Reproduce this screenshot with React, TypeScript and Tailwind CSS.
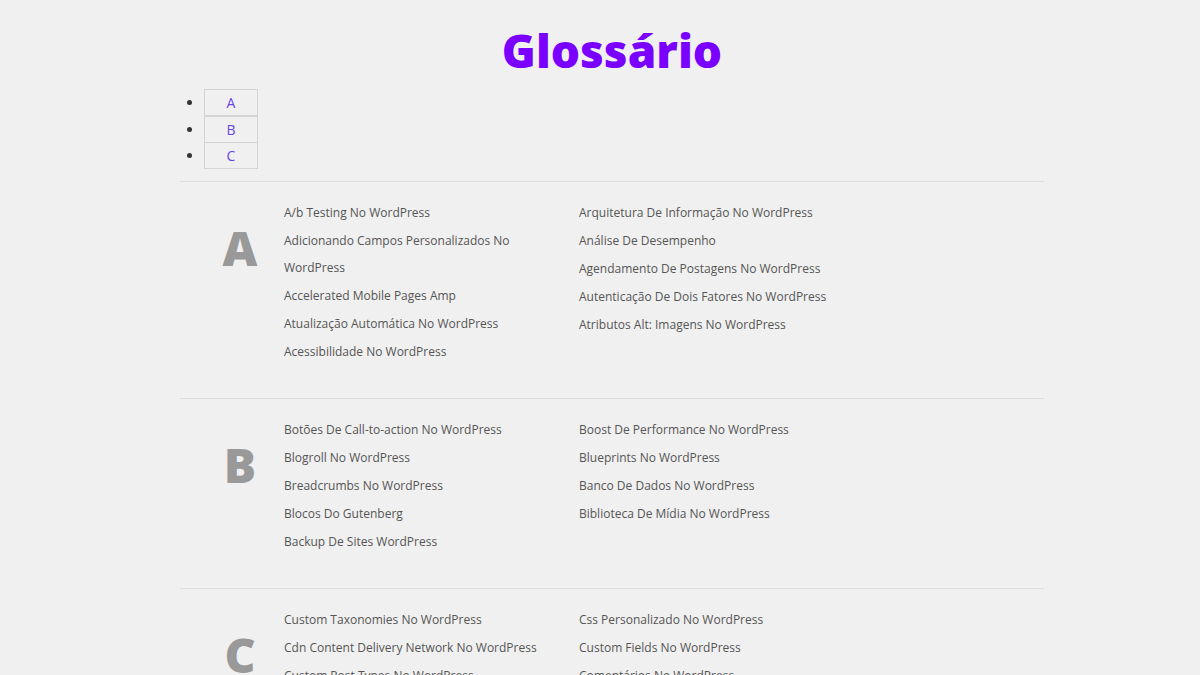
import React from 'react';

const font = { fontFamily: '"Open Sans", "DejaVu Sans", sans-serif' };

interface Section {
  letter: string;
  left: string[];
  right: string[];
}

const sections: Section[] = [
  {
    letter: 'A',
    left: [
      'A/b Testing No WordPress',
      'Adicionando Campos Personalizados No WordPress',
      'Accelerated Mobile Pages Amp',
      'Atualização Automática No WordPress',
      'Acessibilidade No WordPress',
    ],
    right: [
      'Arquitetura De Informação No WordPress',
      'Análise De Desempenho',
      'Agendamento De Postagens No WordPress',
      'Autenticação De Dois Fatores No WordPress',
      'Atributos Alt: Imagens No WordPress',
    ],
  },
  {
    letter: 'B',
    left: [
      'Botões De Call-to-action No WordPress',
      'Blogroll No WordPress',
      'Breadcrumbs No WordPress',
      'Blocos Do Gutenberg',
      'Backup De Sites WordPress',
    ],
    right: [
      'Boost De Performance No WordPress',
      'Blueprints No WordPress',
      'Banco De Dados No WordPress',
      'Biblioteca De Mídia No WordPress',
    ],
  },
  {
    letter: 'C',
    left: [
      'Custom Taxonomies No WordPress',
      'Cdn Content Delivery Network No WordPress',
      'Custom Post Types No WordPress',
    ],
    right: [
      'Css Personalizado No WordPress',
      'Custom Fields No WordPress',
      'Comentários No WordPress',
    ],
  },
];

const TermList: React.FC<{ items: string[]; className: string }> = ({ items, className }) => (
  <ul className={className}>
    {items.map((t) => (
      <li key={t} className="py-[0.5px] text-[12px] leading-[27px] text-[#555555]">
        <a href="#">{t}</a>
      </li>
    ))}
  </ul>
);

export default function App() {
  return (
    <div className="min-h-[675px] bg-[#f0f0f0]" style={font}>
      <div className="ml-[180px] w-[864px]">
        <h1 className="pt-[22px] text-center text-[46px] font-extrabold leading-[56px] text-[#7a00ff]">
          Glossário
        </h1>

        <ul className="mt-[11px] list-disc pl-[24px] text-[#333]">
          {sections.map((s) => (
            <li key={s.letter} className="h-[26.5px] text-[14px] leading-[27px]">
              <a
                href="#"
                className="inline-block h-[27px] w-[54px] border border-[#d4d4d4] text-center align-top text-[14px] leading-[25px] text-[#6a45e0]"
              >
                {s.letter}
              </a>
            </li>
          ))}
        </ul>

        {sections.map((s) => (
          <section
            key={s.letter}
            className="mt-[12px] flex border-t border-[#dcdcdc] pt-[17px] pb-[20px]"
          >
            <div className="w-[104px] shrink-0 pl-4 pt-[21px] text-center text-[48px] font-extrabold leading-[56px] text-[#999999]">
              {s.letter}
            </div>
            <TermList items={s.left} className="w-[270px] shrink-0" />
            <TermList items={s.right} className="ml-[25px] flex-1" />
          </section>
        ))}
      </div>
    </div>
  );
}
